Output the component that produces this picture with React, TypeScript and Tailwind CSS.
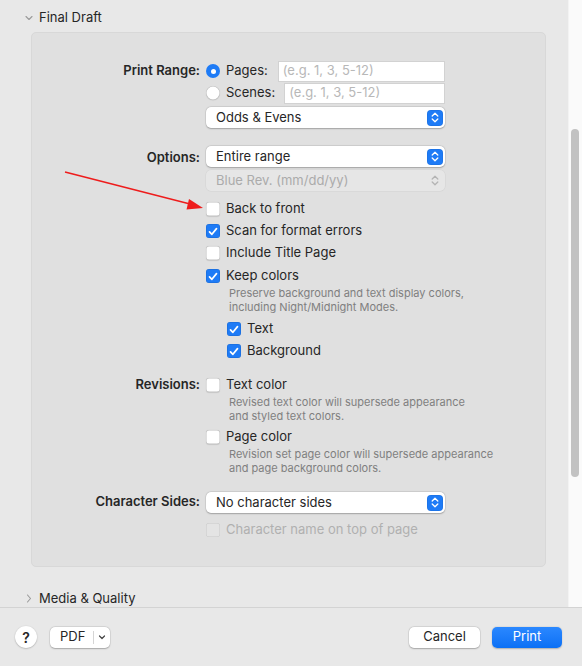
import React from "react"

const font = { fontFamily: "Inter, 'Noto Sans', 'Liberation Sans', sans-serif" }

function Stepper({ disabled }: { disabled?: boolean }) {
  return (
    <span
      className={
        "flex h-[16px] w-[16px] items-center justify-center rounded-[4px] " +
        (disabled ? "" : "bg-[#1e7bf6] shadow-[inset_0_0_0_0.5px_rgba(0,0,0,0.1)]")
      }
    >
      <svg width="8" height="11" viewBox="0 0 8 11" fill="none">
        <path
          d="M1.2 4 L4 1.3 L6.8 4 M1.2 7 L4 9.7 L6.8 7"
          stroke={disabled ? "#b3b3b3" : "#ffffff"}
          strokeWidth="1.3"
          strokeLinecap="round"
          strokeLinejoin="round"
        />
      </svg>
    </span>
  )
}

function Select({ value, disabled }: { value: string; disabled?: boolean }) {
  return (
    <div
      className={
        "flex h-[21px] w-[239px] items-center justify-between rounded-[5px] pl-[10px] pr-[2px] text-[13px] " +
        (disabled
          ? "bg-[#e6e6e6] text-[#ababab] shadow-[0_0_0_0.5px_rgba(0,0,0,0.06)]"
          : "bg-white text-[#262626] shadow-[0_0.5px_1.5px_rgba(0,0,0,0.25),0_0_0_0.5px_rgba(0,0,0,0.08)]")
      }
    >
      <span>{value}</span>
      <Stepper disabled={disabled} />
    </div>
  )
}

function Checkbox({ checked, disabled }: { checked?: boolean; disabled?: boolean }) {
  if (checked) {
    return (
      <span className="flex h-[14px] w-[14px] shrink-0 items-center justify-center rounded-[3px] bg-[#1e7bf6] shadow-[inset_0_0_0_0.5px_rgba(0,0,0,0.15)]">
        <svg width="10" height="9" viewBox="0 0 10 9" fill="none">
          <path d="M1.5 4.8 L3.9 7.3 L8.5 1.6" stroke="#fff" strokeWidth="1.7" strokeLinecap="round" strokeLinejoin="round" />
        </svg>
      </span>
    )
  }
  return (
    <span
      className={
        "h-[14px] w-[14px] shrink-0 rounded-[3px] " +
        (disabled
          ? "bg-[#e4e4e4] shadow-[inset_0_0_0_0.5px_rgba(0,0,0,0.12)]"
          : "bg-white shadow-[inset_0_0_0_0.5px_rgba(0,0,0,0.25),0_0.5px_1px_rgba(0,0,0,0.12)]")
      }
    />
  )
}

function CheckRow({
  label,
  checked,
  disabled,
  short,
  className = "",
}: {
  label: string
  checked?: boolean
  disabled?: boolean
  short?: boolean
  className?: string
}) {
  return (
    <div className={"flex items-center gap-[6px] text-[13px] " + (short ? "h-[20px] " : "h-[22px] ") + className}>
      <Checkbox checked={checked} disabled={disabled} />
      <span className={disabled ? "text-[#b0b0b0]" : "text-[#262626]"}>{label}</span>
    </div>
  )
}

function Desc({ lines, className = "" }: { lines: string[]; className?: string }) {
  return (
    <div className={"pl-[23px] text-[11px] leading-[14px] text-[#7f7f7f] " + className}>
      {lines.map((l) => (
        <div key={l}>{l}</div>
      ))}
    </div>
  )
}

function Row({ label, children, className = "" }: { label?: string; children: React.ReactNode; className?: string }) {
  return (
    <div className={"flex " + className}>
      <div className="w-[174px] shrink-0 pr-[6px] text-right text-[13px] font-semibold text-[#262626]">
        {label && <div className="flex h-[22px] items-center justify-end">{label}</div>}
      </div>
      <div className="flex-1">{children}</div>
    </div>
  )
}

function Radio({ selected }: { selected?: boolean }) {
  return selected ? (
    <span className="flex h-[14px] w-[14px] items-center justify-center rounded-full bg-[#1e7bf6]">
      <span className="h-[5px] w-[5px] rounded-full bg-white" />
    </span>
  ) : (
    <span className="h-[14px] w-[14px] rounded-full bg-white shadow-[inset_0_0_0_0.5px_rgba(0,0,0,0.25),0_0.5px_1px_rgba(0,0,0,0.12)]" />
  )
}

function TextField() {
  return (
    <div className="flex h-[21px] flex-1 items-center border border-[#d2d2d2] bg-white pl-[4px] text-[13px] text-[#b8b8b8]">
      (e.g. 1, 3, 5-12)
    </div>
  )
}

export default function App() {
  return (
    <div className="relative h-[666px] w-[582px] overflow-hidden bg-[#e8e8e8]" style={font}>
      <div className="flex h-[607px]">
        <div className="w-[568px] overflow-hidden">
          <div className="flex h-[32px] items-center pl-[25px] pt-[4px] text-[13px] text-[#262626]">
            <svg width="8" height="6" viewBox="0 0 8 6" fill="none" className="mr-[6px]">
              <path d="M1 1.5 L4 4.5 L7 1.5" stroke="#9a9a9a" strokeWidth="1.1" strokeLinecap="round" strokeLinejoin="round" />
            </svg>
            Final Draft
          </div>

          <div className="ml-[31px] w-[515px] rounded-[5px] border border-[#d8d8d8] bg-[#e0e0e0] pb-[25px] pt-[27px]">
            <Row label="Print Range:">
              <div className="w-[239px]">
                <div className="flex h-[22px] items-center">
                  <Radio selected />
                  <span className="ml-[6px] mr-[10px] text-[13px] text-[#262626]">Pages:</span>
                  <TextField />
                </div>
                <div className="flex h-[22px] items-center">
                  <Radio />
                  <span className="ml-[6px] mr-[9px] text-[13px] text-[#262626]">Scenes:</span>
                  <TextField />
                </div>
                <div className="mt-[3px]">
                  <Select value="Odds & Evens" />
                </div>
              </div>
            </Row>

            <Row label="Options:" className="mt-[19px]">
              <div className="-mt-[1px]">
                <Select value="Entire range" />
              </div>
              <div className="mt-[3px]">
                <Select value="Blue Rev. (mm/dd/yy)" disabled />
              </div>
              <CheckRow label="Back to front" className="mt-[7px]" />
              <CheckRow label="Scan for format errors" checked />
              <CheckRow label="Include Title Page" />
              <CheckRow label="Keep colors" checked short className="mt-[2px]" />
              <Desc lines={["Preserve background and text display colors,", "including Night/Midnight Modes."]} />
              <div className="ml-[21px] mt-[4px]">
                <CheckRow label="Text" checked />
                <CheckRow label="Background" checked />
              </div>
            </Row>

            <Row label="Revisions:" className="mt-[12px]">
              <CheckRow label="Text color" />
              <Desc lines={["Revised text color will supersede appearance", "and styled text colors."]} className="-mt-[1px]" />
              <CheckRow label="Page color" className="mt-[3px]" />
              <Desc lines={["Revision set page color will supersede appearance", "and page background colors."]} className="-mt-[1px]" />
            </Row>

            <Row label="Character Sides:" className="mt-[16px]">
              <div className="mt-[1px]">
                <Select value="No character sides" />
              </div>
              <CheckRow label="Character name on top of page" disabled className="mt-[6px]" />
            </Row>
          </div>

          <div className="mt-[22px] flex items-center pl-[26px] text-[13px] text-[#262626]">
            <svg width="6" height="9" viewBox="0 0 6 9" fill="none" className="mr-[7px]">
              <path d="M1.5 1 L4.5 4.5 L1.5 8" stroke="#9a9a9a" strokeWidth="1.1" strokeLinecap="round" strokeLinejoin="round" />
            </svg>
            Media &amp; Quality
          </div>
        </div>

        <div className="relative w-[14px] bg-[#fafafa] shadow-[inset_0.5px_0_0_rgba(0,0,0,0.06)]">
          <div className="absolute left-[3px] top-[129px] h-[348px] w-[8px] rounded-full bg-[#c2c2c2]" />
        </div>
      </div>

      <div className="flex h-[59px] items-center border-t border-[#d3d3d3] px-[15px] text-[13px] text-[#262626]">
        <div className="flex h-[22px] w-[22px] items-center justify-center rounded-full bg-white text-[14px] font-semibold shadow-[0_0.5px_1.5px_rgba(0,0,0,0.3)]">
          ?
        </div>
        <div className="ml-[13px] flex h-[21px] w-[60px] items-center rounded-[5px] bg-white shadow-[0_0.5px_1.5px_rgba(0,0,0,0.25),0_0_0_0.5px_rgba(0,0,0,0.08)]">
          <span className="pl-[10px]">PDF</span>
          <span className="ml-[8px] h-[13px] w-px bg-[#d5d5d5]" />
          <svg width="8" height="5" viewBox="0 0 8 5" fill="none" className="ml-[4px]">
            <path d="M1.5 1 L4 3.5 L6.5 1" stroke="#444" strokeWidth="1.2" strokeLinecap="round" strokeLinejoin="round" />
          </svg>
        </div>
        <div className="ml-auto flex h-[21px] w-[71px] items-center justify-center rounded-[5px] bg-white shadow-[0_0.5px_1.5px_rgba(0,0,0,0.25),0_0_0_0.5px_rgba(0,0,0,0.08)]">
          Cancel
        </div>
        <div className="ml-[12px] mr-[5px] flex h-[21px] w-[70px] items-center justify-center rounded-[5px] bg-gradient-to-b from-[#2a88ff] to-[#0a70f5] text-white shadow-[0_0.5px_1.5px_rgba(0,0,0,0.25)]">
          Print
        </div>
      </div>

      <svg className="pointer-events-none absolute left-0 top-0" width="582" height="666" viewBox="0 0 582 666">
        <line x1="65" y1="172" x2="192" y2="204.5" stroke="#ee1c1c" strokeWidth="1.6" />
        <path d="M203 208 L189 199 L186.5 209.5 Z" fill="#ee1c1c" />
      </svg>
    </div>
  )
}
